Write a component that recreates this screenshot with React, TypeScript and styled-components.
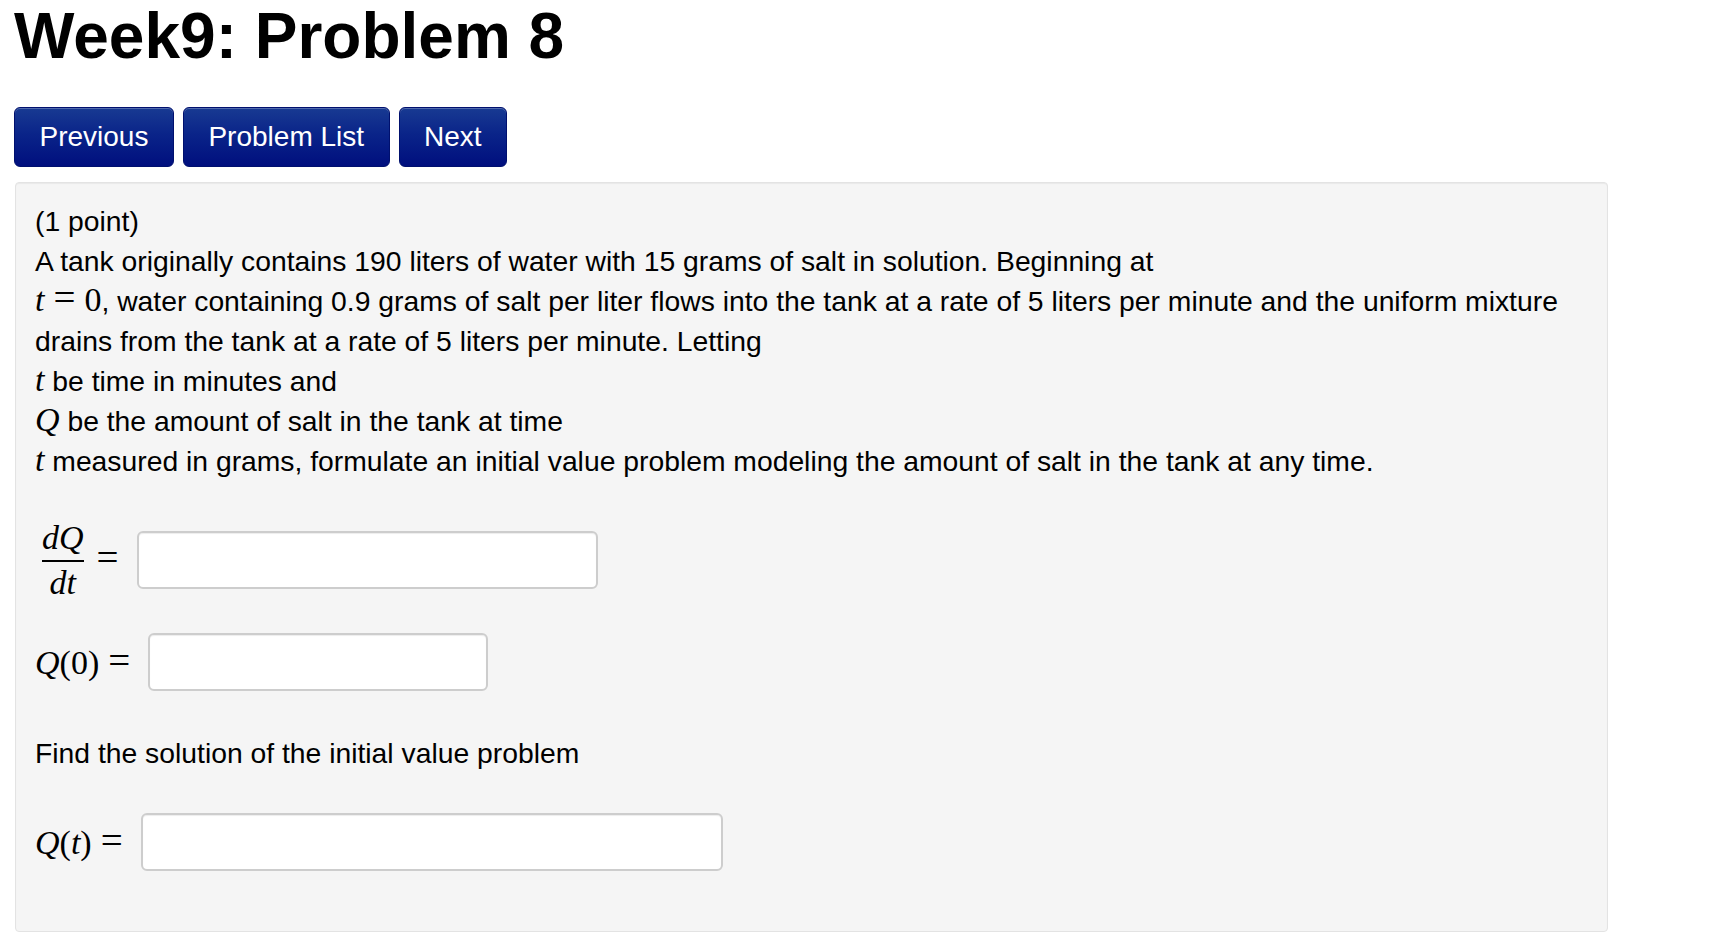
import React from "react";
import styled, { createGlobalStyle } from "styled-components";

const GlobalStyle = createGlobalStyle`
  html, body {
    margin: 0;
    padding: 0;
    background: #fff;
  }
  body {
    font-family: "Liberation Sans", Helvetica, Arial, sans-serif;
    color: #000;
  }
`;

const serif = `"Liberation Serif", "Times New Roman", serif`;

const Page = styled.div`
  padding: 0 14px;
`;

const Title = styled.h1`
  margin: 0;
  font-size: 64px;
  line-height: 72px;
  font-weight: bold;
`;

const NavBar = styled.nav`
  display: flex;
  gap: 9px;
  margin-top: 35px;
`;

const NavButton = styled.button`
  height: 60px;
  padding: 0 24.5px;
  border: 1px solid #00106e;
  border-radius: 6px;
  background: linear-gradient(to bottom, #183a92 0%, #0a2489 45%, #000f7e 100%);
  box-shadow: inset 0 1px 0 rgba(255, 255, 255, 0.25);
  color: #fff;
  font-family: inherit;
  font-size: 28px;
  cursor: pointer;
`;

const Panel = styled.div`
  box-sizing: border-box;
  width: 1593px;
  margin: 15px 0 0 1px;
  padding: 18px 19px 60px;
  background: #f5f5f5;
  border: 1px solid #e3e3e3;
  border-radius: 4px;
  box-shadow: inset 0 1px 1px rgba(0, 0, 0, 0.05);
`;

const ProblemText = styled.p`
  margin: 0;
  font-size: 28.3px;
  line-height: 40px;
`;

const MathVar = styled.span`
  font-family: ${serif};
  font-style: italic;
  font-size: 34px;
  line-height: 0;
`;

const MathNum = styled.span`
  font-family: ${serif};
  font-size: 34px;
  line-height: 0;
`;

const MathRel = styled.span`
  font-family: ${serif};
  font-style: normal;
  font-size: 39px;
  line-height: 1;
  margin: 0 9px;
`;

const TextRel = styled(MathRel)`
  line-height: 0;
`;

const AnswerRow = styled.div<{ $top: number }>`
  display: flex;
  align-items: center;
  margin-top: ${(p) => p.$top}px;
`;

const Fraction = styled.span`
  display: inline-flex;
  flex-direction: column;
  align-items: center;
  margin-left: 3px;
  padding: 0 4px;
  font-family: ${serif};
  font-style: italic;
  font-size: 34px;
  line-height: 33px;
`;

const FracBar = styled.span`
  align-self: stretch;
  height: 2px;
  margin: 6px 0 4px;
  background: #000;
`;

const MathLabel = styled.span<{ $lift: number }>`
  display: inline-flex;
  align-items: baseline;
  padding-bottom: ${(p) => p.$lift}px;
  font-family: ${serif};
  font-size: 34px;
  line-height: 34px;
  white-space: nowrap;
`;

const AnswerInput = styled.input<{ $width: number }>`
  box-sizing: border-box;
  width: ${(p) => p.$width}px;
  height: 58px;
  margin-left: 9px;
  padding: 4px 10px;
  border: 2px solid #cdcdcd;
  border-radius: 6px;
  background: #fff;
  box-shadow: inset 0 1px 1px rgba(0, 0, 0, 0.075);
  font-size: 24px;
  font-family: inherit;
  outline: none;
`;

const PlainLine = styled.p<{ $top: number }>`
  margin: ${(p) => p.$top}px 0 0;
  font-size: 28.3px;
  line-height: 40px;
`;

export default function App() {
  return (
    <>
      <GlobalStyle />
      <Page>
        <Title>Week9: Problem 8</Title>
        <NavBar>
          <NavButton>Previous</NavButton>
          <NavButton>Problem List</NavButton>
          <NavButton>Next</NavButton>
        </NavBar>
        <Panel>
          <ProblemText>
            (1 point)
            <br />
            A tank originally contains 190 liters of water with 15 grams of
            salt in solution. Beginning at
            <br />
            <MathVar>t</MathVar>
            <TextRel>=</TextRel>
            <MathNum>0</MathNum>, water containing 0.9 grams of salt per liter
            flows into the tank at a rate of 5 liters per minute and the uniform
            mixture
            <br />
            drains from the tank at a rate of 5 liters per minute. Letting
            <br />
            <MathVar>t</MathVar> be time in minutes and
            <br />
            <MathVar>Q</MathVar> be the amount of salt in the tank at time
            <br />
            <MathVar>t</MathVar> measured in grams, formulate an initial value
            problem modeling the amount of salt in the tank at any time.
          </ProblemText>

          <AnswerRow $top={40}>
            <Fraction>
              <span>dQ</span>
              <FracBar />
              <span>dt</span>
            </Fraction>
            <MathLabel $lift={6}>
              <MathRel>=</MathRel>
            </MathLabel>
            <AnswerInput $width={461} />
          </AnswerRow>

          <AnswerRow $top={34}>
            <MathLabel $lift={3}>
              <i>Q</i>(0)<MathRel>=</MathRel>
            </MathLabel>
            <AnswerInput $width={340} />
          </AnswerRow>

          <PlainLine $top={42}>
            Find the solution of the initial value problem
          </PlainLine>

          <AnswerRow $top={40}>
            <MathLabel $lift={3}>
              <i>Q</i>(<i>t</i>)<MathRel>=</MathRel>
            </MathLabel>
            <AnswerInput $width={582} />
          </AnswerRow>
        </Panel>
      </Page>
    </>
  );
}
